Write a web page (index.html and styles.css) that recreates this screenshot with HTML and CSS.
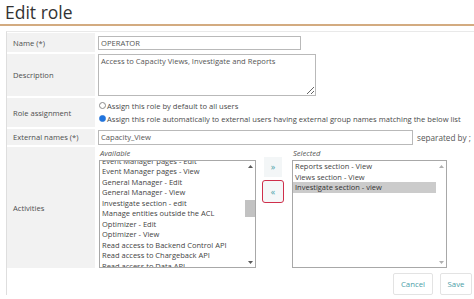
FILE: index.html
```html
<!DOCTYPE html>
<html>
<head>
<meta charset="utf-8">
<link rel="stylesheet" href="styles.css">
</head>
<body>
<div class="title">Edit role</div>
<div class="form">
  <div class="grid">
    <div class="lbl">Name (*)</div>
    <div class="val mid"><input class="txt name" value="OPERATOR"></div>

    <div class="lbl">Description</div>
    <div class="val"><textarea class="desc">Access to Capacity Views, Investigate and Reports</textarea></div>

    <div class="lbl">Role assignment</div>
    <div class="val radios">
      <label class="radio"><input type="radio" name="ra"><span>Assign this role by default to all users</span></label>
      <label class="radio"><input type="radio" name="ra" checked><span>Assign this role automatically to external users having external group names matching the below list</span></label>
    </div>

    <div class="lbl">External names (*)</div>
    <div class="val mid ext"><input class="txt extin" value="Capacity_View"><span class="sep">separated by ;</span></div>

    <div class="lbl">Activities</div>
    <div class="val acts">
      <div class="col avail">
        <div class="cap">Available</div>
        <div class="listbox">
          <div class="items">
            <div class="scrolled">
              <div class="item">Event Manager pages - Edit</div>
              <div class="item">Event Manager pages - View</div>
              <div class="item">General Manager - Edit</div>
              <div class="item">General Manager - View</div>
              <div class="item">Investigate section - edit</div>
              <div class="item">Manage entities outside the ACL</div>
              <div class="item">Optimizer - Edit</div>
              <div class="item">Optimizer - View</div>
              <div class="item">Read access to Backend Control API</div>
              <div class="item">Read access to Chargeback API</div>
              <div class="item">Read access to Data API</div>
            </div>
          </div>
          <div class="sbar">
            <div class="arrow"><svg width="5" height="3" viewBox="0 0 5 3"><polygon points="0,3 2.5,0 5,3"/></svg></div>
            <div class="track"><div class="thumb"></div></div>
            <div class="arrow"><svg width="5" height="3" viewBox="0 0 5 3"><polygon points="0,0 5,0 2.5,3"/></svg></div>
          </div>
        </div>
      </div>
      <div class="movers">
        <button class="mv">&raquo;</button>
        <button class="mv circled">&laquo;</button>
      </div>
      <div class="col sel">
        <div class="cap">Selected</div>
        <div class="listbox">
          <div class="items">
            <div class="item">Reports section - View</div>
            <div class="item">Views section - View</div>
            <div class="item hl">Investigate section - view</div>
          </div>
          <div class="sbar off">
            <div class="arrow"><svg width="5" height="3" viewBox="0 0 5 3"><polygon points="0,3 2.5,0 5,3"/></svg></div>
            <div class="track"></div>
            <div class="arrow"><svg width="5" height="3" viewBox="0 0 5 3"><polygon points="0,0 5,0 2.5,3"/></svg></div>
          </div>
        </div>
      </div>
    </div>
  </div>
  <div class="actions">
    <button class="btn">Cancel</button>
    <button class="btn">Save</button>
  </div>
</div>
</body>
</html>
```

FILE: styles.css
```css
* { box-sizing: border-box; }

html, body {
  margin: 0;
  padding: 0;
  background: #fff;
}

body {
  width: 474px;
  height: 299px;
  overflow: hidden;
  font-family: "Open Sans", sans-serif;
  color: #4a4a4a;
}

.title {
  height: 26px;
  padding: 1px 0 0 5px;
  font-size: 17.5px;
  line-height: 23px;
  color: #333;
  border-bottom: 2px solid #d3ab80;
}

.form {
  margin: 5px 0 0 6px;
  border-top: 1px solid #e9e9e9;
  border-left: 1px solid #dedede;
}

.grid {
  display: grid;
  grid-template-columns: 88px 1fr;
  grid-template-rows: 19px 42px 29px 16px 121px;
  column-gap: 3px;
  row-gap: 2px;
  padding-top: 1px;
}

.lbl {
  display: flex;
  align-items: center;
  padding-left: 6px;
  background: #f2f2f2;
  font-size: 7.6px;
  color: #4e4e4e;
  white-space: nowrap;
}

.val {
  font-size: 7.6px;
  min-width: 0;
}

.mid {
  display: flex;
  align-items: center;
}

.txt {
  font-family: "Open Sans", sans-serif;
  font-size: 7.6px;
  color: #555;
  border: 1px solid #b9b9b9;
  border-radius: 0;
  padding: 0 2px;
  margin: 0;
  outline: none;
  background: #fff;
}

.name {
  width: 203px;
  height: 14px;
}

.desc {
  display: block;
  width: 218px;
  height: 42px;
  margin: 0;
  padding: 1px 2px;
  font-family: "Open Sans", sans-serif;
  font-size: 7.6px;
  line-height: 10px;
  color: #555;
  border: 1px solid #b9b9b9;
  border-radius: 0;
  outline: none;
}

.radios {
  display: flex;
  flex-direction: column;
  padding-top: 1px;
}

.radio {
  display: flex;
  align-items: center;
  height: 13px;
  color: #4a4a4a;
  white-space: nowrap;
}

.radio input {
  appearance: none;
  -webkit-appearance: none;
  width: 7px;
  height: 7px;
  margin: 0 1px 0 1px;
  border: 1px solid #8a8a8a;
  border-radius: 50%;
  background: #fff;
  flex: none;
}

.radio input:checked {
  border-color: #1f6fd6;
  background: radial-gradient(circle, #1f74e0 0 2.2px, #4b93ea 2.6px);
}

.extin {
  width: 315px;
  height: 15px;
}

.sep {
  margin-left: 4px;
  font-size: 8.2px;
  color: #555;
  white-space: nowrap;
}

.acts {
  display: flex;
  align-items: flex-start;
}

.col {
  display: flex;
  flex-direction: column;
}

.avail {
  margin-left: 1px;
  width: 157px;
}

.sel {
  margin-left: 8px;
  width: 155px;
}

.cap {
  height: 13px;
  line-height: 12px;
  padding-left: 1px;
  font-style: italic;
  color: #555;
}

.listbox {
  display: flex;
  height: 108px;
  border: 1px solid #a8a8a8;
  background: #fff;
}

.items {
  flex: 1;
  overflow: hidden;
  min-width: 0;
}

.scrolled {
  margin-top: -5.5px;
}

.item {
  height: 10.5px;
  line-height: 10.5px;
  padding-left: 2px;
  font-size: 7.5px;
  white-space: nowrap;
  color: #444;
}

.item.hl {
  background: #cbcbcb;
  color: #333;
}

.sbar {
  width: 10px;
  display: flex;
  flex-direction: column;
  background: #fff;
}

.arrow {
  height: 10px;
  display: flex;
  align-items: center;
  justify-content: center;
}

.arrow svg {
  fill: #5a5a5a;
}

.sbar.off .arrow svg {
  fill: #b0b0b0;
}

.track {
  flex: 1;
}

.thumb {
  margin-top: 29px;
  height: 17px;
  background: #c2c2c2;
}

.movers {
  margin-left: 6px;
  margin-top: 10px;
  width: 22px;
  display: flex;
  flex-direction: column;
  align-items: center;
  gap: 3px;
}

.mv {
  width: 18px;
  height: 20px;
  padding: 0;
  margin: 0;
  border: none;
  background: #f3f6f7;
  color: #4fa3ab;
  font-family: "Open Sans", sans-serif;
  font-size: 9px;
  line-height: 18px;
}

.mv.circled {
  width: 22px;
  height: 23px;
  border: 1.5px solid #cf2f4b;
  border-radius: 3px;
  background: #f5f7f8;
}

.actions {
  display: flex;
  justify-content: flex-end;
  gap: 7px;
  padding: 5px 2px 0 0;
}

.btn {
  height: 22px;
  padding: 0;
  margin: 0;
  border: 1px solid #e3e3e3;
  border-radius: 2px;
  background: #fff;
  color: #4c9ea7;
  font-family: "Open Sans", sans-serif;
  font-size: 7.8px;
}

.btn:first-child {
  width: 40px;
}

.btn:last-child {
  width: 32px;
}
```
